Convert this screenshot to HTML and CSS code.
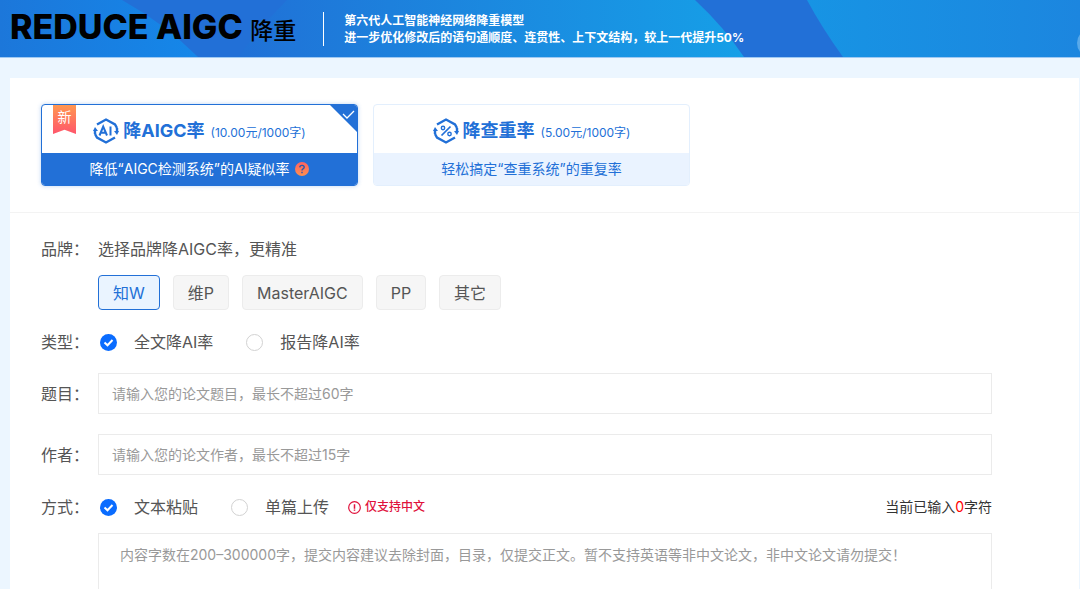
FILE: index.html
```
<!DOCTYPE html>
<html lang="zh-CN">
<head>
    <meta charset="UTF-8">
    <meta name="viewport" content="width=device-width, initial-scale=1.0">
    <title>REDUCE AIGC 降重</title>
    <link rel="stylesheet" href="styles.css">
</head>
<body>
    <header class="header">
        <svg class="header-bg" viewBox="0 0 1080 57" preserveAspectRatio="none" aria-hidden="true">
            <defs>
                <linearGradient id="bg-left"><stop offset="0" stop-color="#1c77da"/><stop offset="1" stop-color="#1587e9"/></linearGradient>
                <linearGradient id="bg-mid"><stop offset="0" stop-color="#2071d7"/><stop offset="0.3" stop-color="#1d80dc"/><stop offset="1" stop-color="#169fe7"/></linearGradient>
                <linearGradient id="bg-right"><stop offset="0" stop-color="#1794e4"/><stop offset="1" stop-color="#1c86df"/></linearGradient>
            </defs>
            <rect width="1080" height="57" fill="#2270d7"/>
            <path d="M0 0H122Q165 24 198 57H0Z" fill="url(#bg-left)"/>
            <path d="M287 0H695Q724 27 744 57H238Q260 27 287 0Z" fill="url(#bg-mid)"/>
            <path d="M807 0Q822 28 843 57H1080V0Z" fill="url(#bg-right)"/>
            <circle cx="1091" cy="43" r="14" fill="#58a9ea"/>
        </svg>
        <h1 class="logo">REDUCE AIGC <span>降重</span></h1>
        <p class="slogan">第六代人工智能神经网络降重模型<br>进一步优化修改后的语句通顺度、连贯性、上下文结构，较上一代提升50%</p>
    </header>

    <main class="container">
        <div class="tabs">
            <button type="button" class="tab active">
                <span class="tab-top">
                    <svg width="26" height="26" viewBox="0 0 26 26" fill="none" stroke="#2270d7" stroke-width="2.400" aria-hidden="true">
                        <path d="M4 6.500L13 1.500L22 6.500L24 10M22 19.500L13 24.500L4 19.500L2 16"/>
                        <path d="M2 16V12M24 10V14"/>
                        <path d="M0 13L2 9L5 13ZM21 13H26L24 17Z" fill="#2270d7" stroke="none"/>
                        <path d="M6.500 17.500L10.200 8.500L14 17.500M8 14.800H12.600M17.500 8.500V17.500" stroke-width="2"/>
                    </svg>
                    <span class="tab-title">降AIGC率</span>
                    <span class="tab-price">(10.00元/1000字)</span>
                </span>
                <span class="tab-bottom">降低“AIGC检测系统”的AI疑似率
                    <svg width="14" height="14" viewBox="0 0 14 14" aria-hidden="true">
                        <defs><linearGradient id="tip" x2="0" y2="1"><stop stop-color="#ff6262"/><stop offset="1" stop-color="#ff904f"/></linearGradient></defs>
                        <circle cx="7" cy="7" r="7" fill="url(#tip)"/>
                        <path d="M4.800 5.400Q4.900 3.400 7 3.400Q9.200 3.400 9.200 5.300Q9.200 6.300 8 6.900Q7 7.400 7 8.600M7 9.800V11.200" fill="none" stroke="#2458b0" stroke-width="1.400"/>
                    </svg>
                </span>
                <span class="ribbon">新</span>
                <svg class="corner" width="27" height="27" viewBox="0 0 27 27" aria-hidden="true">
                    <path d="M0 0H27V27Z" fill="#2270d7"/>
                    <path d="M13 9L17 13L24 6" fill="none" stroke="#fff" stroke-width="1.300"/>
                </svg>
            </button>
            <button type="button" class="tab">
                <span class="tab-top">
                    <svg width="26" height="26" viewBox="0 0 26 26" fill="none" stroke="#2270d7" stroke-width="2.400" aria-hidden="true">
                        <path d="M4 6.500L13 1.500L22 6.500L24 10M22 19.500L13 24.500L4 19.500L2 16"/>
                        <path d="M2 16V12M24 10V14"/>
                        <path d="M0 13L2 9L5 13ZM21 13H26L24 17Z" fill="#2270d7" stroke="none"/>
                        <path d="M17.500 8.500L8.500 17.500" stroke-width="1.700"/>
                        <circle cx="10" cy="10" r="1.700" stroke-width="1.400"/>
                        <circle cx="16.500" cy="16" r="1.700" stroke-width="1.400"/>
                    </svg>
                    <span class="tab-title">降查重率</span>
                    <span class="tab-price">(5.00元/1000字)</span>
                </span>
                <span class="tab-bottom">轻松搞定“查重系统”的重复率</span>
            </button>
        </div>

        <form class="form">
            <div class="form-group brand">
                <span class="form-label">品牌：</span>
                <div class="form-content">
                    <p>选择品牌降AIGC率，更精准</p>
                    <div class="brand-list">
                        <button type="button" class="brand-btn active">知W</button>
                        <button type="button" class="brand-btn">维P</button>
                        <button type="button" class="brand-btn">MasterAIGC</button>
                        <button type="button" class="brand-btn">PP</button>
                        <button type="button" class="brand-btn">其它</button>
                    </div>
                </div>
            </div>

            <div class="form-group type">
                <span class="form-label">类型：</span>
                <div class="form-content options">
                    <label class="option"><input type="radio" name="type" checked>全文降AI率</label>
                    <label class="option"><input type="radio" name="type">报告降AI率</label>
                </div>
            </div>

            <div class="form-group">
                <label class="form-label" for="title">题目：</label>
                <input class="form-content text-input" type="text" id="title" maxlength="60" placeholder="请输入您的论文题目，最长不超过60字">
            </div>

            <div class="form-group">
                <label class="form-label" for="author">作者：</label>
                <input class="form-content text-input" type="text" id="author" maxlength="15" placeholder="请输入您的论文作者，最长不超过15字">
            </div>

            <div class="form-group method">
                <span class="form-label">方式：</span>
                <div class="form-content options">
                    <label class="option"><input type="radio" name="method" checked>文本粘贴</label>
                    <label class="option"><input type="radio" name="method">单篇上传</label>
                    <span class="notice">
                        <svg width="13" height="13" viewBox="0 0 13 13" fill="none" stroke="#e0123c" aria-hidden="true">
                            <circle cx="6.500" cy="6.500" r="5.800" stroke-width="1.200"/>
                            <path d="M6.500 3.300V7.800M6.500 8.600V9.800" stroke-width="1.500"/>
                        </svg>
                        仅支持中文
                    </span>
                    <span class="counter">当前已输入<b>0</b>字符</span>
                </div>
            </div>

            <textarea class="content-input" aria-label="论文内容" placeholder="内容字数在200–300000字，提交内容建议去除封面，目录，仅提交正文。暂不支持英语等非中文论文，非中文论文请勿提交！"></textarea>
        </form>
    </main>
</body>
</html>
```
FILE: styles.css
```
* {
    margin: 0;
    padding: 0;
    box-sizing: border-box;
}

body {
    display: flex;
    flex-direction: column;
    min-height: 100vh;
    background-color: #ecf6ff;
    color: #555;
    font-family: Inter, "Noto Sans CJK SC", sans-serif;
    font-size: 16px;
    line-height: 24px;
}

button, input, textarea {
    font-family: inherit;
    font-size: inherit;
    line-height: inherit;
    color: inherit;
}

button {
    cursor: pointer;
}

/* header */
.header {
    position: relative;
    display: flex;
    align-items: center;
    height: 58px;
    padding: 0 10px;
    border-bottom: 1px solid #9fc9f2;
}

.header-bg {
    position: absolute;
    top: 0;
    left: 0;
    width: 100%;
    height: 100%;
    z-index: -1;
}

.logo {
    color: #000;
    font-size: 34px;
    font-weight: 800;
    line-height: 56px;
    white-space: nowrap;
}

.logo span {
    font-size: 23px;
    font-weight: 500;
}

.slogan {
    margin-left: 27px;
    padding-left: 20px;
    border-left: 1px solid #fff;
    color: #fff;
    font-size: 12px;
    font-weight: 700;
    line-height: 17px;
}

/* card */
.container {
    display: flex;
    flex: 1;
    flex-direction: column;
    margin: 20px 1px 0 10px;
    padding-top: 26px;
    background-color: #fff;
}

.tabs {
    display: flex;
    gap: 15px;
    padding: 0 31px 26px;
    border-bottom: 1px solid #f3f3f3;
}

.tab {
    position: relative;
    flex: 0 1 317px;
    border: 1px solid #e3effd;
    border-radius: 4px;
    background-color: #fff;
    color: #2270d7;
    overflow: hidden;
}

.tab-top {
    display: flex;
    align-items: center;
    justify-content: center;
    height: 48px;
    padding-top: 4px;
}

.tab-title {
    margin: 0 6px 0 4px;
    font-size: 18px;
    font-weight: 700;
}

.tab-price {
    padding-top: 4px;
    font-size: 12px;
}

.tab-bottom {
    display: flex;
    align-items: center;
    justify-content: center;
    gap: 6px;
    height: 32px;
    background-color: #eaf3ff;
    font-size: 14px;
}

.tab.active {
    border-color: #2270d7;
    box-shadow: 0 0 4px rgba(34, 112, 215, 0.3);
}

.tab.active .tab-bottom {
    background-color: #2270d7;
    color: #fff;
}

.ribbon {
    position: absolute;
    top: 0;
    left: 11px;
    width: 23px;
    height: 29px;
    background: linear-gradient(#ff9750, #ff566c);
    clip-path: polygon(0 0, 100% 0, 100% 100%, 50% 85%, 0 100%);
    color: #fff;
    font-size: 14px;
}

.corner {
    position: absolute;
    top: 0;
    right: 0;
}

/* form */
.form {
    display: flex;
    flex: 1;
    flex-direction: column;
    padding: 24px 87px 0 31px;
}

.form-group {
    display: flex;
    align-items: center;
    margin-bottom: 20px;
}

.form-label {
    flex: 0 0 57px;
}

.form-content {
    flex: 1;
    min-width: 0;
}

.brand {
    align-items: flex-start;
}

.brand-list {
    display: flex;
    gap: 13px;
    margin-top: 14px;
}

.brand-btn {
    height: 35px;
    padding: 0 14px;
    border: 1px solid #ececec;
    border-radius: 4px;
    background-color: #f6f6f6;
}

.brand-btn.active {
    border-color: #2270d7;
    background-color: #eaf4ff;
    color: #2270d7;
}

.type {
    margin-bottom: 19px;
}

.options {
    display: flex;
    align-items: center;
}

.option {
    display: flex;
    align-items: center;
    margin-right: 31px;
}

.option input {
    appearance: none;
    width: 17px;
    height: 17px;
    margin: 0 17px 0 2px;
    border: 1px solid #d2d2d2;
    border-radius: 50%;
}

.option input:checked {
    border: none;
    background: #0a6cff url("data:image/svg+xml,%3Csvg xmlns='http://www.w3.org/2000/svg' viewBox='0 0 17 17'%3E%3Cpath d='M4.500 8.500L7.500 11.300L12.500 6' fill='none' stroke='white' stroke-width='2'/%3E%3C/svg%3E");
}

.text-input {
    height: 41px;
    padding: 0 13px;
    border: 1px solid #ebebeb;
    font-size: 14px;
    outline: none;
}

::placeholder {
    color: #999;
}

.method {
    margin-bottom: 14px;
}

.notice {
    display: flex;
    align-items: center;
    gap: 4px;
    margin-left: -12px;
    color: #e0123c;
    font-size: 12px;
    font-weight: 500;
}

.counter {
    margin-left: auto;
    color: #333;
    font-size: 14px;
}

.counter b {
    color: #f00;
    font-weight: 400;
}

.content-input {
    flex: 1;
    margin-left: 57px;
    padding: 9px 21px;
    border: 1px solid #ebebeb;
    border-bottom: none;
    font-size: 14px;
    outline: none;
    resize: none;
}
```
